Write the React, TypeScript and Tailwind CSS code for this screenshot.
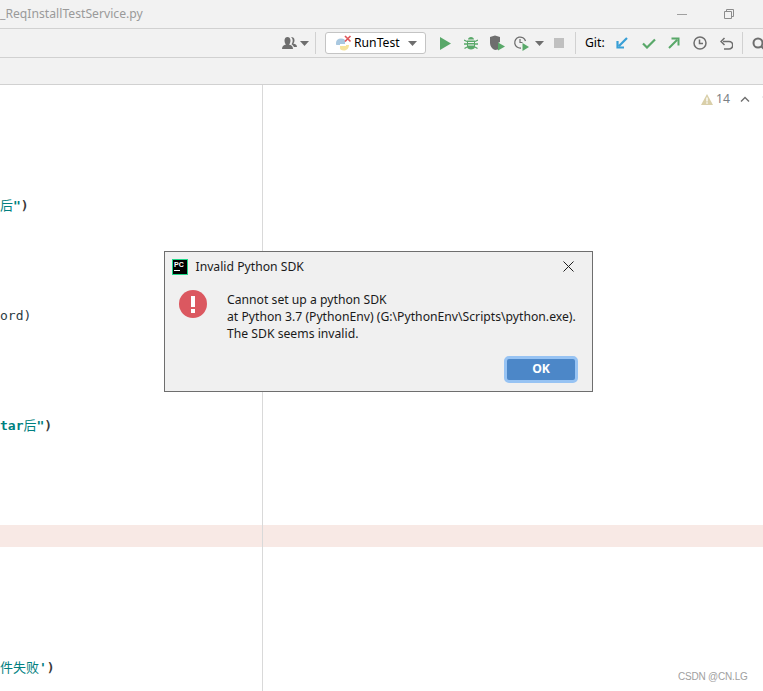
import React from 'react';

const uiFont = "font-['Noto_Sans','Open_Sans',sans-serif]";

const codeRows: Record<number, React.ReactNode> = {
  5: <><span className="font-normal">后</span><span>"</span><span className="text-[#3a3a3a]">)</span></>,
  10: <span className="font-normal text-[#2b3a42]">ord)</span>,
  15: <><span>tar</span><span className="font-normal">后</span><span>"</span><span className="text-[#3a3a3a]">)</span></>,
  26: <><span className="font-normal">件失败</span><span>'</span><span className="text-[#3a3a3a]">)</span></>,
};

const Dropdown = () => (
  <svg width="9" height="5" viewBox="0 0 9 5"><path d="M0 0h9L4.5 5z" fill="#6e6e6e" /></svg>
);

const Divider = () => <div className="h-[22px] w-px bg-[#d1d1d1]" />;

const Toolbar = () => (
  <div className="flex h-[29px] items-center border-b border-[#d1d1d1] bg-[#f2f2f2] pl-[282px] [&>*]:shrink-0">
    <svg width="15" height="14" viewBox="0 0 15 14">
      <path d="M0 13c0-3 2-4 4-4.500C3 7.500 2.500 6 2.500 4.500 2.500 2 4 1 5.500 1S8.500 2 8.500 4.500C8.500 6 8 7.500 7 8.500c2 .5 4 1.500 4 4.500z" fill="#6e6e6e" />
      <path d="M9 1c2 0 3.500 1 3.500 3.200 0 1.300-.5 2.600-1.300 3.400 2 .4 3.800 1.300 3.800 3.400h-3c-.5-1.300-1.500-2.200-2.500-2.800.7-1 1.200-2.400 1.200-3.800C10.700 3 10 1.800 9 1z" fill="#6e6e6e" />
    </svg>
    <span className="ml-[3px] flex"><Dropdown /></span>
    <div className="ml-[6px]"><Divider /></div>
    <div className="ml-[9px] flex h-[22px] w-[101px] items-center rounded-[3px] border border-[#c4c4c4] bg-white pl-[9px]">
      <svg width="17" height="17" viewBox="0 0 17 17">
        <path d="M1 8c0-3 2-4.500 5-4.500S10 4.500 10 6v3H5v1H1.500C1 10 1 9 1 8z" fill="#a9c8e0" />
        <path d="M14 10c0 3-2 5.500-5 5.500s-4-1-4-2.500v-2h6v-1h3z" fill="#f6e39c" />
        <path d="M10 1l5.500 5.500M15.500 1L10 6.500" stroke="#e0575b" strokeWidth="1.700" />
      </svg>
      <span className={`ml-[2px] text-[12.200px] leading-none text-black ${uiFont}`}>RunTest</span>
      <span className="ml-[8px] flex"><Dropdown /></span>
    </div>
    <svg className="ml-[14px]" width="11" height="13" viewBox="0 0 11 13"><path d="M0 0l11 6.500L0 13z" fill="#59a869" /></svg>
    <svg className="ml-[13px]" width="14" height="14" viewBox="0 0 14 14" fill="#59a869">
      <path d="M4 3.500C4 2 5.500 1 7 1s3 1 3 2.500zM3 4.500h8V11c0 1.500-2 2.500-4 2.500S3 12.500 3 11z" />
      <path d="M0 4l3 1.500M14 4l-3 1.500M0 8h3M14 8h-3M.5 12.500L3 11M13.500 12.500L11 11" stroke="#59a869" strokeWidth="1.300" />
      <path d="M4 6.500h6M4 9h6" stroke="#f2f2f2" strokeWidth="1" />
    </svg>
    <svg className="ml-[11px]" width="17" height="16" viewBox="0 0 17 16">
      <path d="M1 2l5-1.500L11 2v5l-2 1v6.500L6 15C3 14 1 11 1 8z" fill="#6e6e6e" />
      <path d="M9 7.500l7 4-7 4z" fill="#59a869" />
    </svg>
    <svg className="ml-[7px]" width="17" height="16" viewBox="0 0 17 16" fill="none">
      <path d="M8 13A5.500 5.500 0 1 1 12.500 6" stroke="#6e6e6e" strokeWidth="1.300" />
      <path d="M7 4v3.500h2.500" stroke="#6e6e6e" strokeWidth="1.200" />
      <path d="M9.500 8l6.500 4-6.500 4z" fill="#59a869" />
    </svg>
    <span className="ml-[5px] flex"><Dropdown /></span>
    <div className="ml-[10px] h-[10px] w-[10px] bg-[#c0c0c0]" />
    <div className="ml-[11px]"><Divider /></div>
    <span className={`ml-[9px] w-[19px] whitespace-nowrap text-[12.200px] leading-none text-black ${uiFont}`}>Git:</span>
    <svg className="ml-[12px]" width="12" height="12" viewBox="0 0 12 12">
      <path d="M11 1L3 9M1.500 4v6.500H8" fill="none" stroke="#389fd6" strokeWidth="2.200" />
    </svg>
    <svg className="ml-[14px]" width="14" height="11" viewBox="0 0 14 11">
      <path d="M1 5.500l4 4 8-8" fill="none" stroke="#59a869" strokeWidth="2.200" />
    </svg>
    <svg className="ml-[12px]" width="12" height="12" viewBox="0 0 12 12">
      <path d="M1 11l8-8M3.500 1.500h7v7" fill="none" stroke="#59a869" strokeWidth="2" />
    </svg>
    <svg className="ml-[13px]" width="14" height="14" viewBox="0 0 14 14" fill="none" stroke="#6e6e6e">
      <circle cx="7" cy="7" r="6" strokeWidth="1.500" />
      <path d="M6.500 3.500v4h3.500" strokeWidth="1.500" />
    </svg>
    <svg className="ml-[13px]" width="13" height="13" viewBox="0 0 13 13" fill="none">
      <path d="M3 4.500h6a3 3 0 0 1 0 7.500H4" stroke="#6e6e6e" strokeWidth="1.600" />
      <path d="M4.500 1L1 4.500 4.500 8" stroke="#6e6e6e" strokeWidth="1.500" />
    </svg>
    <div className="ml-[9px]"><Divider /></div>
    <svg className="ml-[9px]" width="13" height="13" viewBox="0 0 13 13" fill="none" stroke="#6e6e6e" strokeWidth="2">
      <circle cx="6" cy="6" r="4.500" />
      <path d="M9.500 9.500L13 13" />
    </svg>
  </div>
);

const Dialog = () => (
  <div className={`absolute left-[164px] top-[251px] flex h-[141px] w-[429px] flex-col border border-[#6e6e6e] bg-[#f0f0f0] ${uiFont}`}>
    <div className="flex h-[29px] items-center pl-[7px]">
      <div className="flex h-[16px] w-[16px] flex-col items-start border border-[#21d789] bg-black pl-px">
        <span className="font-['Liberation_Sans'] text-[7px] font-bold leading-[9px] text-white">PC</span>
        <div className="mt-px h-px w-[6px] bg-white" />
      </div>
      <span className="ml-[7.500px] mt-px text-[12.200px] leading-none text-[#1a1a1a]">Invalid Python SDK</span>
      <svg className="ml-auto mr-[18px]" width="11" height="11" viewBox="0 0 11 11">
        <path d="M.5.500l10 10M10.500.500l-10 10" stroke="#1f1f1f" strokeWidth="1" />
      </svg>
    </div>
    <div className="flex pl-[14px] pt-[9px]">
      <svg width="28" height="28" viewBox="0 0 28 28">
        <circle cx="14" cy="14" r="14" fill="#db5860" />
        <rect x="12" y="6" width="4" height="11" fill="#fff" />
        <rect x="12" y="19" width="4" height="4" fill="#fff" />
      </svg>
      <div className="ml-[20px] mt-px text-[12.200px] leading-[17px] text-[#1a1a1a]">
        <div>Cannot set up a python SDK</div>
        <div>at Python 3.7 (PythonEnv) (G:\PythonEnv\Scripts\python.exe).</div>
        <div>The SDK seems invalid.</div>
      </div>
    </div>
    <div className="mt-auto mb-[8px] mr-[14px] flex justify-end">
      <button className="flex h-[27px] w-[74px] items-center justify-center rounded-[5px] border-[3px] border-[#97c3f3] bg-[#4c87c8] text-[12.200px] font-bold leading-none text-white">
        OK
      </button>
    </div>
  </div>
);

export default function App() {
  return (
    <div className="relative h-[691px] w-[763px] overflow-hidden bg-white">
      <div className={`flex h-[29px] items-center border-b border-[#d1d1d1] bg-[#f2f2f2] ${uiFont}`}>
        <span className="text-[12.200px] leading-none text-[#9a9a9a]">_ReqInstallTestService.py</span>
        <div className="ml-auto mr-[37px] h-px w-[10px] bg-[#a0a0a0]" />
        <svg className="mr-[29px]" width="10" height="10" viewBox="0 0 10 10" fill="none" stroke="#8c8c8c">
          <path d="M.5 2.500h7v7h-7zM2.500 2.500v-2h7v7h-2" />
        </svg>
      </div>
      <Toolbar />
      <div className="h-[27px] border-b border-[#d1d1d1] bg-[#f2f2f2]" />

      {/* editor rows */}
      <div className="flex flex-col">
        {Array.from({ length: 28 }).map((_, i) => (
          <div
            key={i}
            className={`flex h-[22px] items-center font-['DejaVu_Sans_Mono','Noto_Sans_CJK_SC',monospace] text-[13px] font-bold text-[#008080] ${i === 20 ? 'bg-[#f8e9e5]' : ''}`}
          >
            {codeRows[i] && <div className="whitespace-pre">{codeRows[i]}</div>}
          </div>
        ))}
      </div>

      {/* right margin guide */}
      <div className="absolute left-[262px] top-[85px] bottom-0 w-px bg-[#d9d9d9]" />

      {/* inspection widget */}
      <div className={`absolute left-[701px] top-[92px] flex items-center ${uiFont}`}>
        <svg width="12" height="11" viewBox="0 0 12 11">
          <path d="M6 0l6 11H0z" fill="#d9cfa9" />
          <rect x="5.300" y="3.500" width="1.400" height="4" fill="#fff" />
          <rect x="5.300" y="8.300" width="1.400" height="1.400" fill="#fff" />
        </svg>
        <span className="ml-[3px] text-[12.200px] leading-[14px] text-[#7a7f85]">14</span>
        <svg className="ml-[10px] shrink-0" width="10" height="6" viewBox="0 0 10 6" fill="none">
          <path d="M1 5.500l4-4 4 4" stroke="#6e6e6e" strokeWidth="1.400" />
        </svg>
        <svg className="ml-[12px] shrink-0" width="10" height="6" viewBox="0 0 10 6" fill="none">
          <path d="M1 .5l4 4 4-4" stroke="#6e6e6e" strokeWidth="1.400" />
        </svg>
      </div>

      <Dialog />

      <span className="absolute left-[678px] top-[670px] font-['Liberation_Sans',sans-serif] text-[10px] tracking-[-0.2px] leading-[14px] text-[#a0a0a0]">CSDN @CN.LG</span>
    </div>
  );
}
